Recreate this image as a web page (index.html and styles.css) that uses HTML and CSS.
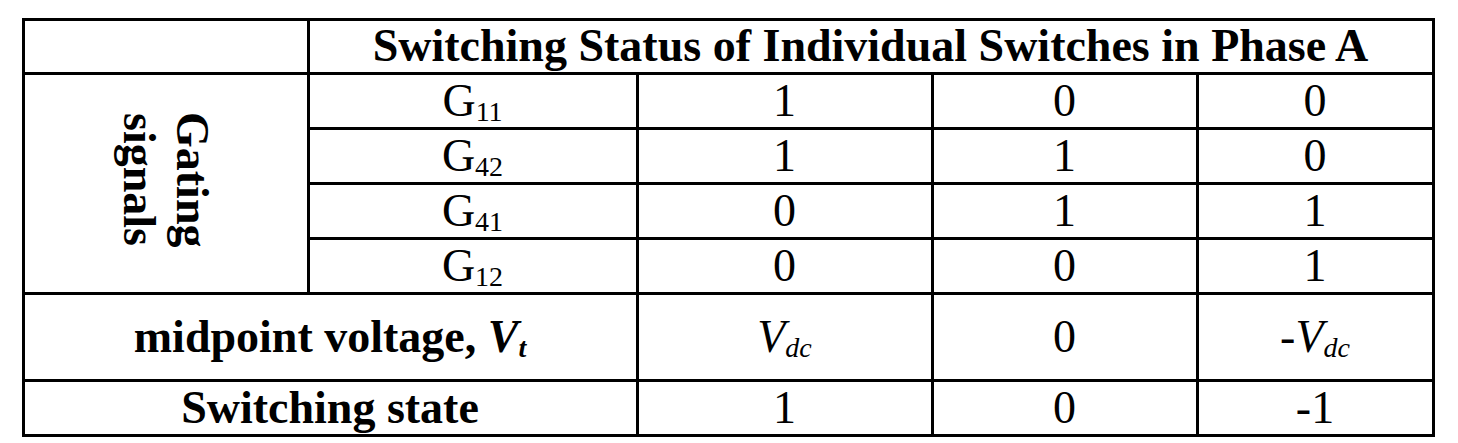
FILE: index.html
```html
<!DOCTYPE html>
<html lang="en">
<head>
    <meta charset="UTF-8">
    <meta name="viewport" content="width=device-width, initial-scale=1.0">
    <title>Switching Status</title>
    <link rel="stylesheet" href="styles.css">
</head>
<body>
    <table class="switch-table">
        <colgroup>
            <col class="col-label">
            <col class="col-gate">
            <col class="col-s1">
            <col class="col-s2">
            <col class="col-s3">
        </colgroup>
        <tr class="row-head">
            <td></td>
            <th colspan="4">Switching Status of Individual Switches in Phase A</th>
        </tr>
        <tr class="row-gate">
            <th rowspan="4" class="gating"><span class="vertical">Gating<br>signals</span></th>
            <td>G<sub>11</sub></td>
            <td>1</td>
            <td>0</td>
            <td>0</td>
        </tr>
        <tr class="row-gate">
            <td>G<sub>42</sub></td>
            <td>1</td>
            <td>1</td>
            <td>0</td>
        </tr>
        <tr class="row-gate">
            <td>G<sub>41</sub></td>
            <td>0</td>
            <td>1</td>
            <td>1</td>
        </tr>
        <tr class="row-gate">
            <td>G<sub>12</sub></td>
            <td>0</td>
            <td>0</td>
            <td>1</td>
        </tr>
        <tr class="row-volt">
            <th colspan="2">midpoint voltage, <i>V<sub>t</sub></i></th>
            <td><i>V<sub>dc</sub></i></td>
            <td>0</td>
            <td>-<i>V<sub>dc</sub></i></td>
        </tr>
        <tr class="row-state">
            <th colspan="2">Switching state</th>
            <td>1</td>
            <td>0</td>
            <td>-1</td>
        </tr>
    </table>
</body>
</html>
```

FILE: styles.css
```css
body{
    margin:0px;
    padding:17.5px 0px 0px 21.5px;
    background-color:#ffffff;
    color:#000000;
    font-family:"Liberation Serif", "Times New Roman", serif;
}

.switch-table{
    border-collapse:collapse;
    table-layout:fixed;
    width:1413px;
    font-size:46px;
    line-height:46px;
}

.col-label{ width:285px; }
.col-gate{ width:329px; }
.col-s1{ width:295px; }
.col-s2{ width:265px; }
.col-s3{ width:236px; }

.switch-table td,
.switch-table th{
    border:3px solid #000;
    padding:0px;
    text-align:center;
    vertical-align:middle;
}

.switch-table th{
    font-weight:bold;
}

.switch-table sub{
    font-size:28px;
    line-height:0;
    vertical-align:-5px;
}

.row-head{ height:54.5px; }
.row-gate{ height:55px; }
.row-volt{ height:87px; }
.row-state{ height:55px; }

.gating .vertical{
    display:inline-block;
    writing-mode:vertical-rl;
    line-height:53px;
    text-align:center;
}
```
